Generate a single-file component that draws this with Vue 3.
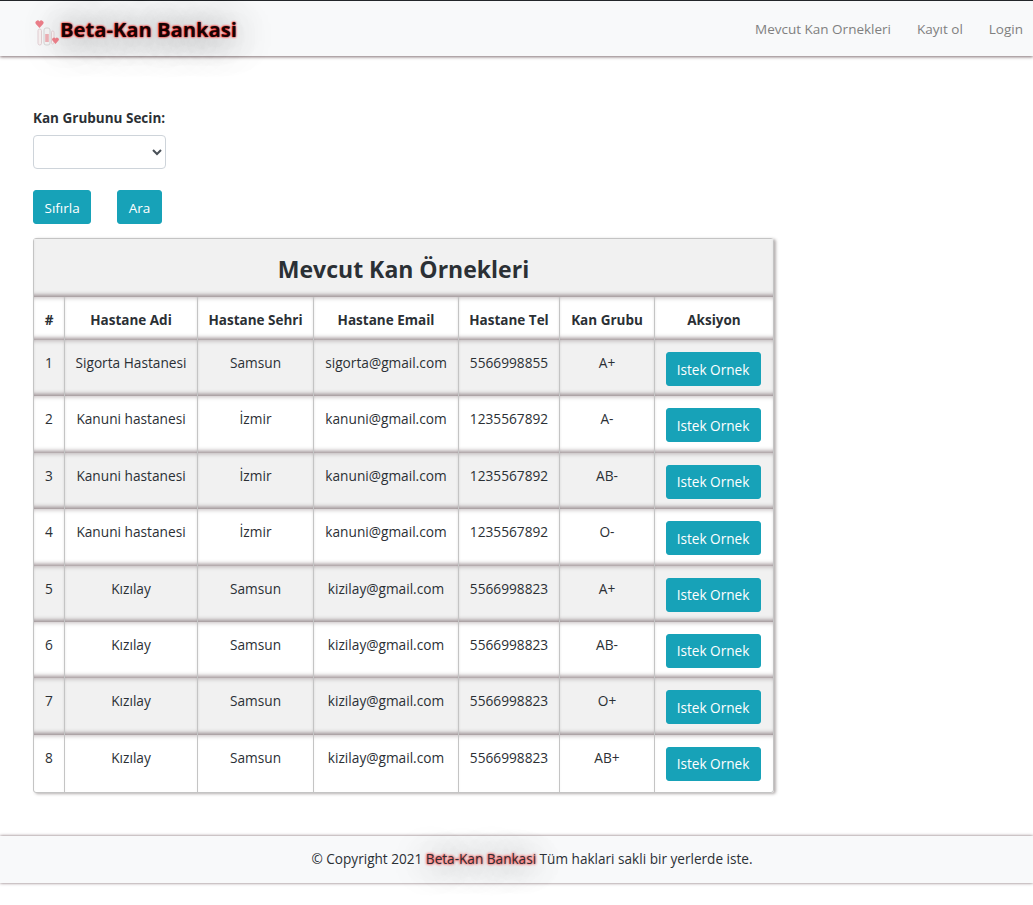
<script setup>
const columns = ['#', 'Hastane Adi', 'Hastane Sehri', 'Hastane Email', 'Hastane Tel', 'Kan Grubu', 'Aksiyon']

const samples = [
  { id: 1, name: 'Sigorta Hastanesi', city: 'Samsun', email: 'sigorta@gmail.com', tel: '5566998855', group: 'A+' },
  { id: 2, name: 'Kanuni hastanesi', city: 'İzmir', email: 'kanuni@gmail.com', tel: '1235567892', group: 'A-' },
  { id: 3, name: 'Kanuni hastanesi', city: 'İzmir', email: 'kanuni@gmail.com', tel: '1235567892', group: 'AB-' },
  { id: 4, name: 'Kanuni hastanesi', city: 'İzmir', email: 'kanuni@gmail.com', tel: '1235567892', group: 'O-' },
  { id: 5, name: 'Kızılay', city: 'Samsun', email: 'kizilay@gmail.com', tel: '5566998823', group: 'A+' },
  { id: 6, name: 'Kızılay', city: 'Samsun', email: 'kizilay@gmail.com', tel: '5566998823', group: 'AB-' },
  { id: 7, name: 'Kızılay', city: 'Samsun', email: 'kizilay@gmail.com', tel: '5566998823', group: 'O+' },
  { id: 8, name: 'Kızılay', city: 'Samsun', email: 'kizilay@gmail.com', tel: '5566998823', group: 'AB+' }
]
</script>

<template>
  <div class="page">
    <nav class="navbar">
      <a class="brand" href="#">
        <svg class="logo" width="26" height="34" viewBox="0 0 26 34" fill="none">
          <path d="M6.5 16 l3.6 -4 a2.2 2.2 0 0 0 -3.6 -2.6 a2.2 2.2 0 0 0 -3.6 2.6 z" fill="#e8707c" />
          <rect x="5" y="17" width="3.5" height="16" rx="1.7" fill="#f6eeee" stroke="#dcc8cc" />
          <rect x="11" y="16" width="6" height="17" rx="2" fill="#f1f1f1" stroke="#cfcfcf" />
          <rect x="12.2" y="22" width="3.6" height="8" fill="#eaa6ac" />
          <rect x="18.5" y="19" width="2.5" height="13" rx="1.2" fill="#f6eeee" stroke="#dcc8cc" />
          <path d="M22.5 32 l3 -3.4 a1.8 1.8 0 0 0 -3 -2.2 a1.8 1.8 0 0 0 -3 2.2 z" fill="#e8707c" />
        </svg>
        <span>Beta-Kan Bankasi</span>
      </a>
      <ul class="nav-links">
        <li><a href="#">Mevcut Kan Ornekleri</a></li>
        <li><a href="#">Kayıt ol</a></li>
        <li><a href="#">Login</a></li>
      </ul>
    </nav>

    <main class="content">
      <form class="filter" @submit.prevent>
        <label for="group">Kan Grubunu Secin:</label>
        <select id="group" class="group-select">
          <option></option>
          <option>A+</option>
          <option>A-</option>
          <option>B+</option>
          <option>B-</option>
          <option>AB+</option>
          <option>AB-</option>
          <option>O+</option>
          <option>O-</option>
        </select>
        <div class="filter-buttons">
          <button class="btn" type="reset">Sıfırla</button>
          <button class="btn" type="submit">Ara</button>
        </div>
      </form>

      <table class="samples">
        <colgroup>
          <col style="width: 30px">
          <col style="width: 133px">
          <col style="width: 116px">
          <col style="width: 145px">
          <col style="width: 101px">
          <col style="width: 95px">
          <col style="width: 119px">
        </colgroup>
        <thead>
          <tr class="title-row">
            <th colspan="7"><h2>Mevcut Kan Örnekleri</h2></th>
          </tr>
          <tr class="head-row">
            <th v-for="col in columns" :key="col">{{ col }}</th>
          </tr>
        </thead>
        <tbody>
          <tr v-for="row in samples" :key="row.id">
            <td>{{ row.id }}</td>
            <td>{{ row.name }}</td>
            <td>{{ row.city }}</td>
            <td>{{ row.email }}</td>
            <td>{{ row.tel }}</td>
            <td>{{ row.group }}</td>
            <td class="action"><button class="btn btn-request" type="button">Istek Ornek</button></td>
          </tr>
        </tbody>
      </table>
    </main>

    <footer class="footer">
      © Copyright 2021 <span class="footer-brand">Beta-Kan Bankasi</span> Tüm haklari sakli bir yerlerde iste.
    </footer>
  </div>
</template>

<style scoped>
.page {
  color: #2b3035;
  font-size: 14px;
  height: 905px;
  overflow: hidden;
}

.navbar {
  display: flex;
  align-items: center;
  justify-content: space-between;
  height: 56px;
  box-sizing: border-box;
  border-top: 1px solid #23262a;
  background: #f8f9fa;
  box-shadow: 0 1px 3px rgba(90, 65, 70, 0.75);
  padding: 0 10px 0 33px;
}

.brand {
  display: flex;
  align-items: center;
  color: #160404;
  font-size: 20.2px;
  font-weight: 700;
  text-decoration: none;
  text-shadow: 0 0 2px #ff1f1f, 0 0 2px #ff1f1f, 0 5px 34px rgba(0, 0, 0, 0.5), 0 0 36px rgba(0, 0, 0, 0.4);
}

.logo {
  flex-shrink: 0;
  margin-right: 1px;
  opacity: 0.9;
  filter: blur(0.4px);
}

.nav-links {
  display: flex;
  gap: 26px;
  list-style: none;
  margin: 0;
  padding: 0;
}

.nav-links a {
  color: #808080;
  font-size: 13.5px;
  text-decoration: none;
}

.content {
  padding: 52px 33px 0;
}

.filter {
  display: flex;
  flex-direction: column;
  align-items: flex-start;
}

.filter label {
  font-weight: 700;
  font-size: 13.5px;
  line-height: 20px;
  margin-bottom: 7px;
}

.group-select {
  width: 133px;
  height: 34px;
  border: 1px solid #ced4da;
  border-radius: 4px;
  background-color: #fff;
  color: #495057;
}

.filter-buttons {
  display: flex;
  gap: 26px;
  margin-top: 21px;
  margin-bottom: 14px;
}

.btn {
  height: 34px;
  padding: 2px 10.5px 0;
  border: 1px solid #17a2b8;
  border-radius: 3px;
  background: #17a2b8;
  color: #fff;
  font-family: inherit;
  font-size: 13.5px;
}

.btn-request {
  width: 95px;
  padding: 0;
  font-size: 13.6px;
}

.samples {
  width: 739px;
  table-layout: fixed;
  border-collapse: separate;
  border-spacing: 0;
  border: 1px solid #c4c4c4;
  border-radius: 3px;
  box-shadow: 2px 1px 3px rgba(90, 80, 80, 0.45);
}

.samples th,
.samples td {
  border-left: 1px solid #c4c4c4;
  text-align: center;
  box-sizing: border-box;
}

.samples th:first-child,
.samples td:first-child {
  border-left: 0;
}

.title-row th {
  height: 58px;
  padding-top: 5px;
  background: #f1f1f1;
  box-shadow: inset 0 -5px 4px -3px rgba(90, 70, 75, 0.6);
}

.title-row h2 {
  margin: 0;
  font-size: 23px;
  font-weight: 700;
  line-height: 1.2;
}

.head-row th {
  height: 43px;
  padding-top: 4px;
  font-size: 13.5px;
  font-weight: 700;
  box-shadow: inset 0 4px 4px -3px rgba(90, 70, 75, 0.35), inset 0 -5px 4px -3px rgba(90, 70, 75, 0.6);
}

.samples td {
  height: 56.4px;
  padding: 11px 0 0;
  vertical-align: top;
  line-height: 24px;
  font-size: 13.7px;
  box-shadow: inset 0 4px 4px -3px rgba(90, 70, 75, 0.35), inset 0 -5px 4px -3px rgba(90, 70, 75, 0.6);
}

.samples tbody tr:last-child td {
  height: 57.4px;
  box-shadow: inset 0 4px 4px -3px rgba(90, 70, 75, 0.35);
}

.samples td.action {
  padding: 12px 2px 0 0;
  line-height: 0;
}

.samples tbody tr:nth-child(odd) td {
  background: #f1f1f1;
}

.footer {
  margin-top: 43px;
  height: 47px;
  padding-left: 31px;
  line-height: 46px;
  text-align: center;
  background: #f8f9fa;
  box-shadow: 0 0 3px rgba(90, 65, 70, 0.8);
  font-size: 13.6px;
}

.footer-brand {
  text-shadow: 0 0 2px #ff3b3b, 0 0 3px #ff3b3b, 0 2px 32px rgba(0, 0, 0, 0.55), 0 0 34px rgba(0, 0, 0, 0.35);
}
</style>

<style>
body {
  margin: 0;
  background: #fff;
  font-family: "Open Sans", "Noto Sans", sans-serif;
}
</style>
